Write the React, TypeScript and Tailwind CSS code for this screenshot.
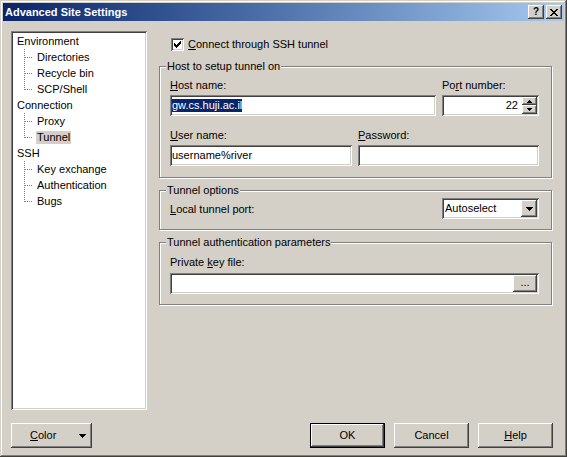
import React from "react"

const sunken =
  "bg-white shadow-[inset_1px_1px_0_#808080,inset_-1px_-1px_0_#fff,inset_2px_2px_0_#404040,inset_-2px_-2px_0_#d4d0c8]"
const raised =
  "bg-[#d4d0c8] shadow-[inset_-1px_-1px_0_#404040,inset_1px_1px_0_#fff,inset_-2px_-2px_0_#808080,inset_2px_2px_0_#d4d0c8]"

const tree = [
  { t: "Environment", l: 0 },
  { t: "Directories", l: 1 },
  { t: "Recycle bin", l: 1 },
  { t: "SCP/Shell", l: 1, last: true },
  { t: "Connection", l: 0 },
  { t: "Proxy", l: 1 },
  { t: "Tunnel", l: 1, last: true, sel: true },
  { t: "SSH", l: 0 },
  { t: "Key exchange", l: 1 },
  { t: "Authentication", l: 1 },
  { t: "Bugs", l: 1, last: true },
]

function Connector({ last }: { last?: boolean }) {
  return (
    <svg width="11" height="16" className="shrink-0" shapeRendering="crispEdges">
      <line x1="0.5" y1="0" x2="0.5" y2={last ? 9 : 16} stroke="#808080" strokeDasharray="1 1" />
      <line x1="1" y1="8.5" x2="9" y2="8.5" stroke="#808080" strokeDasharray="1 1" />
    </svg>
  )
}

function Group({ title, className, children }: { title: string; className?: string; children: React.ReactNode }) {
  return (
    <div className={"border border-[#808080] shadow-[1px_1px_0_#fff,inset_1px_1px_0_#fff] " + (className ?? "")}>
      <div className="-mt-[7px] ml-[6px] w-fit bg-[#d4d0c8] px-[1px] leading-[13px]">{title}</div>
      {children}
    </div>
  )
}

function Arrow({ up }: { up?: boolean }) {
  return (
    <svg width="5" height="3" shapeRendering="crispEdges">
      {up ? <path d="M2 0h1v1h1v1h1v1H0V2h1V1h1z" fill="#000" /> : <path d="M0 0h5v1H4v1H3v1H2V2H1V1H0z" fill="#000" />}
    </svg>
  )
}

function Button({ children, def, className }: { children: React.ReactNode; def?: boolean; className?: string }) {
  return (
    <div className={"h-[25px] w-[75px] " + (def ? "border border-black " : "") + (className ?? "")}>
      <div className={raised + " flex h-full w-full items-center justify-center"}>{children}</div>
    </div>
  )
}

export default function App() {
  return (
    <div className="h-[457px] w-[567px] bg-[#d4d0c8] p-[3px] font-['Liberation_Sans',Arial,sans-serif] text-[11px] leading-[13px] text-black shadow-[inset_-1px_-1px_0_#404040,inset_1px_1px_0_#d4d0c8,inset_-2px_-2px_0_#808080,inset_2px_2px_0_#fff]">
      {/* title bar */}
      <div className="flex h-[18px] items-center bg-gradient-to-r from-[#0a246a] to-[#a6caf0] pl-[2px] pr-[2px]">
        <div className="flex-1 font-bold text-white">Advanced Site Settings</div>
        <div className={raised + " flex h-[14px] w-[16px] items-center justify-center text-[10px] font-bold leading-none"}>?</div>
        <div className={raised + " ml-[2px] flex h-[14px] w-[16px] items-center justify-center"}>
          <svg width="8" height="7" shapeRendering="crispEdges">
            <path d="M0 0h2v1h1v1h2V1h1V0h2v1H7v1H6v1H5v1h1v1h1v1h1v1H6V6H5V5H3v1H2v1H0V6h1V5h1V4h1V3H2V2H1V1H0z" fill="#000" />
          </svg>
        </div>
      </div>

      <div className="mt-[10px] flex pl-[8px]">
        {/* tree */}
        <div className={sunken + " h-[379px] w-[136px] pt-[2px]"}>
          {tree.map((it) => (
            <div key={it.t} className="flex h-[16px] items-center pl-[5px]">
              {it.l === 1 && (
                <>
                  <div className="w-[8px]" />
                  <Connector last={it.last} />
                </>
              )}
              <span className={"px-[1px] " + (it.l === 1 ? "ml-[1px] " : "") + (it.sel ? "bg-[#d4d0c8]" : "")}>{it.t}</span>
            </div>
          ))}
        </div>

        {/* right side */}
        <div className="ml-[12px] w-[393px]">
          <div className="mt-[7px] ml-[12px] flex items-center">
            <div className={sunken + " flex h-[13px] w-[13px] items-center justify-center"}>
              <svg width="7" height="7" shapeRendering="crispEdges">
                <path d="M6 0h1v3H6v1H5v1H4v1H3v1H2V6H1V5H0V2h1v1h1v1h1V3h1V2h1V1h1z" fill="#000" />
              </svg>
            </div>
            <span className="ml-[4px]">
              <u>C</u>onnect through SSH tunnel
            </span>
          </div>

          <Group title="Host to setup tunnel on" className="mt-[15px] h-[112px]">
            <div className="pl-[10px]">
              <div className="mt-[6px] flex gap-[6px]">
                <div className="w-[266px]">
                  <div>
                    <u>H</u>ost name:
                  </div>
                  <div className={sunken + " mt-[3px] flex h-[21px] items-center px-[2px]"}>
                    <span className="bg-[#0a246a] text-white">gw.cs.huji.ac.il</span>
                  </div>
                </div>
                <div className="w-[97px]">
                  <div>
                    Po<u>r</u>t number:
                  </div>
                  <div className={sunken + " mt-[3px] flex h-[21px] items-center justify-end py-[2px] pr-[2px]"}>
                    <span className="mr-[4px]">22</span>
                    <div className="flex h-full w-[15px] flex-col">
                      <div className={raised + " flex h-[8px] items-center justify-center"}>
                        <Arrow up />
                      </div>
                      <div className={raised + " flex h-[9px] items-center justify-center"}>
                        <Arrow />
                      </div>
                    </div>
                  </div>
                </div>
              </div>
              <div className="mt-[13px] flex gap-[6px]">
                <div className="w-[182px]">
                  <div>
                    <u>U</u>ser name:
                  </div>
                  <div className={sunken + " mt-[3px] flex h-[21px] items-center px-[2px]"}>username%river</div>
                </div>
                <div className="w-[181px]">
                  <div>
                    <u>P</u>assword:
                  </div>
                  <div className={sunken + " mt-[3px] h-[21px]"} />
                </div>
              </div>
            </div>
          </Group>

          <Group title="Tunnel options" className="mt-[12px] h-[40px]">
            <div className="mt-[1px] flex h-[21px] items-center pl-[10px]">
              <div className="w-[272px] pt-[2px]">
                <u>L</u>ocal tunnel port:
              </div>
              <div className={sunken + " flex h-[21px] w-[97px] items-center p-[2px]"}>
                <span className="flex-1 pl-[1px]">Autoselect</span>
                <div className={raised + " flex h-full w-[16px] items-center justify-center"}>
                  <svg width="7" height="4" shapeRendering="crispEdges">
                    <path d="M0 0h7v1H6v1H5v1H4v1H3V3H2V2H1V1H0z" fill="#000" />
                  </svg>
                </div>
              </div>
            </div>
          </Group>

          <Group title="Tunnel authentication parameters" className="mt-[12px] h-[63px]">
            <div className="pl-[10px]">
              <div className="mt-[7px]">
                Private <u>k</u>ey file:
              </div>
              <div className={sunken + " mt-[4px] flex h-[21px] w-[369px] items-center justify-end p-[2px]"}>
                <div className={raised + " flex h-full w-[24px] items-center justify-center pb-[2px]"}>...</div>
              </div>
            </div>
          </Group>
        </div>
      </div>

      {/* bottom buttons */}
      <div className="mt-[13px] flex pl-[8px] pr-[11px]">
        <div className={raised + " flex h-[25px] w-[81px] items-center pl-[19px] pr-[6px]"}>
          <span className="flex-1">
            <u>C</u>olor
          </span>
          <svg width="7" height="4" shapeRendering="crispEdges">
            <path d="M0 0h7v1H6v1H5v1H4v1H3V3H2V2H1V1H0z" fill="#000" />
          </svg>
        </div>
        <div className="flex-1" />
        <Button def>OK</Button>
        <Button className="ml-[9px]">Cancel</Button>
        <Button className="ml-[9px]">
          <span>
            <u>H</u>elp
          </span>
        </Button>
      </div>
    </div>
  )
}
